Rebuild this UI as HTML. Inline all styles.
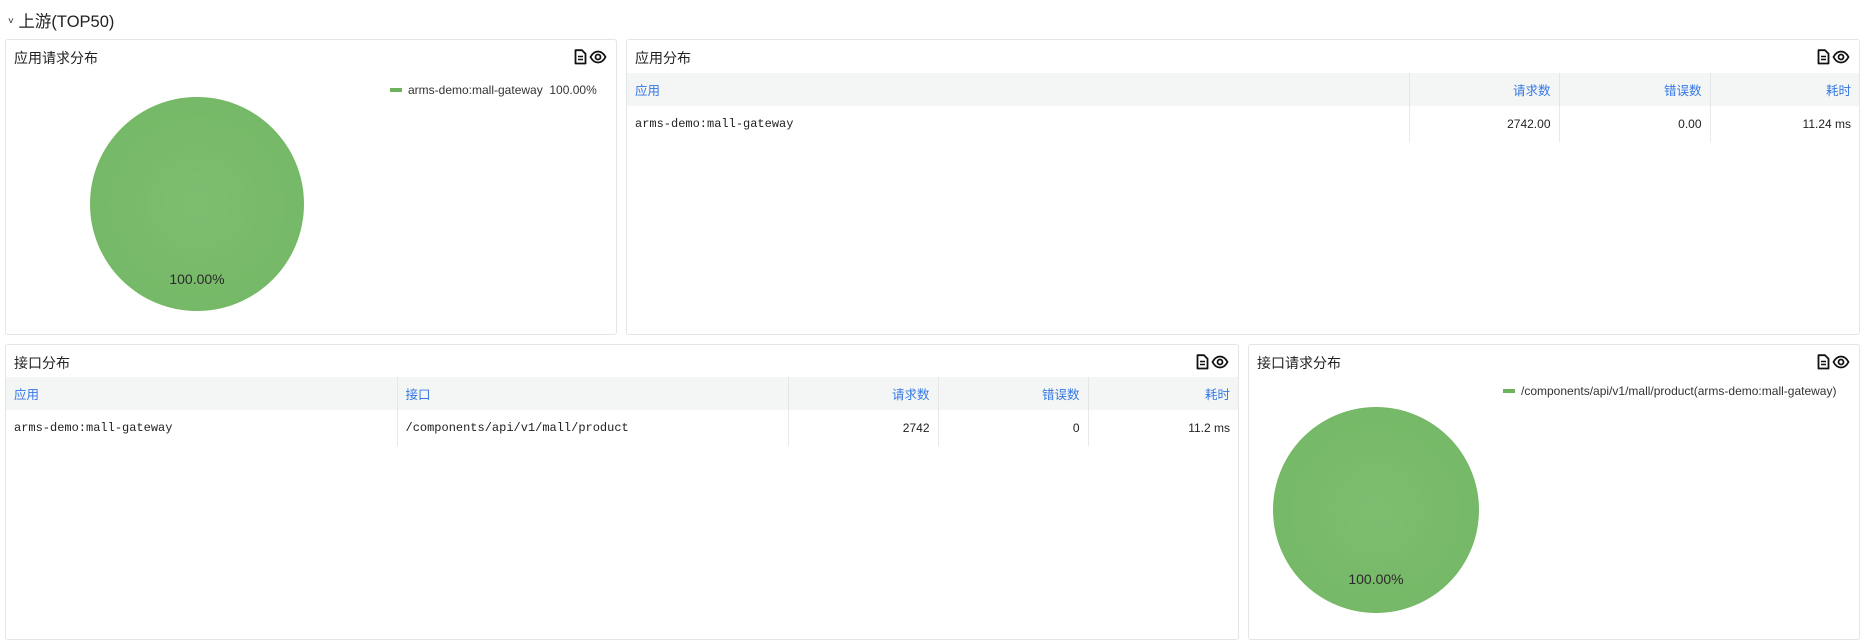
<!DOCTYPE html>
<html><head><meta charset="utf-8"><style>
*{box-sizing:border-box;margin:0;padding:0}
body{width:1865px;height:639px;background:#fff;font-family:"Liberation Sans","Noto Sans CJK SC",sans-serif;color:#222;position:relative;overflow:hidden}
.t{position:absolute;left:8px;top:8px;font-size:16.5px;color:#222}
.p{position:absolute;border:1px solid #e3e5e8;border-radius:3px;background:#fff;overflow:hidden}
.h{position:absolute;left:8px;top:8px;font-size:14px;color:#222}
.ic{position:absolute;top:9px}
table{position:absolute;left:0;border-collapse:collapse;font-size:12.5px}
th{background:#f4f5f5;color:#3478e6;font-weight:normal;height:33px;padding:0 8px;border-right:1px solid #e3e5e8}
td{height:36px;padding:0 8px;border-right:1px solid #e8e9eb;font-size:12px}
th:last-child,td:last-child{border-right:none}
.r{text-align:right}.l{text-align:left}
.m{font-family:"Liberation Mono",monospace;font-size:12px}
.pie{position:absolute;border-radius:50%;background:radial-gradient(circle,#7dbd6f,#72b764)}
.pl{position:absolute;font-size:14px;color:#2a2a2a;transform:translate(-50%,-50%)}
.lg{position:absolute;font-size:12px;color:#333;display:flex;align-items:center;gap:6px}
.lg i{display:inline-block;width:12px;height:4px;background:#6db35f}
</style></head><body>
<div class="t"><span style="font-size:10px;vertical-align:3px">˅</span> 上游(TOP50)</div>

<svg width="0" height="0" style="position:absolute"><defs>
<g id="ico"><path d="M1.5 1.2h6.5l3.5 3.5V14.5H1.5z" fill="none" stroke="#111" stroke-width="1.8" stroke-linejoin="round"/><path d="M4 7.5h5M4 10.5h5" stroke="#111" stroke-width="1.5"/>
<path d="M16.5 8c2-3.8 4.5-5.5 7.5-5.5s5.5 1.7 7.5 5.5c-2 3.8-4.5 5.5-7.5 5.5s-5.5-1.7-7.5-5.5z" fill="none" stroke="#111" stroke-width="1.8"/><circle cx="24" cy="8" r="2.5" fill="none" stroke="#111" stroke-width="1.8"/></g></defs></svg>

<div class="p" style="left:5px;top:39px;width:612px;height:296px">
<div class="h">应用请求分布</div>
<svg class="ic" style="left:568px" width="34" height="16"><use href="#ico"/></svg>
<div class="lg" style="left:384px;top:43px"><i></i>arms-demo:mall-gateway&nbsp;&nbsp;100.00%</div>
<div class="pie" style="left:84px;top:57px;width:214px;height:214px"></div>
<div class="pl" style="left:191px;top:239px">100.00%</div>
</div>

<div class="p" style="left:626px;top:39px;width:1234px;height:296px">
<div class="h">应用分布</div>
<svg class="ic" style="left:1190px" width="34" height="16"><use href="#ico"/></svg>
<table style="top:33px;width:1232px">
<tr><th class="l" style="width:782px">应用</th><th class="r" style="width:150px">请求数</th><th class="r" style="width:151px">错误数</th><th class="r">耗时</th></tr>
<tr><td class="m">arms-demo:mall-gateway</td><td class="r">2742.00</td><td class="r">0.00</td><td class="r">11.24 ms</td></tr>
</table>
</div>

<div class="p" style="left:5px;top:344px;width:1234px;height:296px">
<div class="h">接口分布</div>
<svg class="ic" style="left:1190px" width="34" height="16"><use href="#ico"/></svg>
<table style="top:32px;width:1232px">
<tr><th class="l" style="width:391px">应用</th><th class="l" style="width:391px">接口</th><th class="r" style="width:150px">请求数</th><th class="r" style="width:150px">错误数</th><th class="r">耗时</th></tr>
<tr><td class="m">arms-demo:mall-gateway</td><td class="m">/components/api/v1/mall/product</td><td class="r">2742</td><td class="r">0</td><td class="r">11.2 ms</td></tr>
</table>
</div>

<div class="p" style="left:1248px;top:344px;width:612px;height:296px">
<div class="h">接口请求分布</div>
<svg class="ic" style="left:568px" width="34" height="16"><use href="#ico"/></svg>
<div class="lg" style="left:254px;top:39px"><i></i>/components/api/v1/mall/product(arms-demo:mall-gateway)</div>
<div class="pie" style="left:24px;top:62px;width:206px;height:206px"></div>
<div class="pl" style="left:127px;top:234px">100.00%</div>
</div>
</body></html>
